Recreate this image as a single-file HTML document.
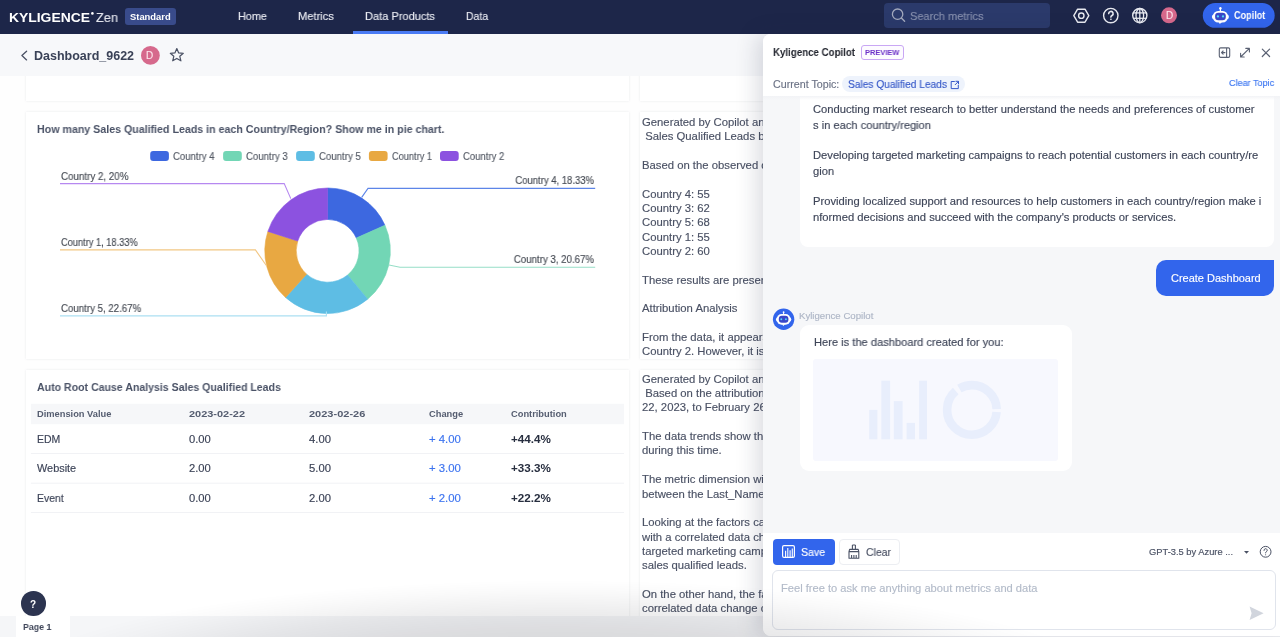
<!DOCTYPE html>
<html><head><meta charset="utf-8">
<style>
*{box-sizing:border-box;margin:0;padding:0}
html,body{width:1280px;height:637px;overflow:hidden;background:#fefefe;font-family:"Liberation Sans",sans-serif;color:#3f4659;position:relative}
.a{position:absolute}
.t{position:absolute;line-height:1;white-space:pre;will-change:transform}
.s{-webkit-text-stroke:0.15px currentColor}
.card{position:absolute;background:#fff;box-shadow:0 0 2.5px rgba(20,30,50,0.09)}
svg{position:absolute;overflow:visible}
</style></head><body>
<!-- NAV -->
<div class="a" style="left:0;top:0;width:1280px;height:34px;background:#1d2649"></div>
<div class="a" style="left:125px;top:8px;width:51px;height:17px;background:#394b8b;border-radius:3px"></div>
<div class="a" style="left:353px;top:31px;width:95px;height:3px;background:#4a7bf4"></div>
<div class="a" style="left:884px;top:3px;width:166px;height:25px;background:#2b3a6b;border-radius:4px"></div>
<svg style="left:0;top:0" width="1280" height="34">
  <circle cx="897.6" cy="14.2" r="5.2" fill="none" stroke="#a3a9bd" stroke-width="1.3"/>
  <line x1="901.4" y1="18" x2="904.6" y2="21.2" stroke="#a3a9bd" stroke-width="1.4" stroke-linecap="round"/>
  <polygon points="1073.8,15.7 1077.6,9.2 1085,9.2 1088.8,15.7 1085,22.2 1077.6,22.2" fill="none" stroke="#e8eaf0" stroke-width="1.4" stroke-linejoin="round"/>
  <circle cx="1081.3" cy="15.7" r="2.7" fill="none" stroke="#e8eaf0" stroke-width="1.4"/>
  <circle cx="1110.8" cy="15.6" r="7.2" fill="none" stroke="#e8eaf0" stroke-width="1.4"/>
  <path d="M1108.7 13.6 a2.2 2.2 0 1 1 3.3 1.9 c-0.8 0.45 -1.1 0.8 -1.1 1.6" fill="none" stroke="#e8eaf0" stroke-width="1.6" stroke-linecap="round"/>
  <rect x="1110.2" y="18.6" width="1.4" height="1.4" fill="#e8eaf0"/>
  <circle cx="1139.8" cy="15.6" r="7.1" fill="none" stroke="#e8eaf0" stroke-width="1.4"/>
  <ellipse cx="1139.8" cy="15.6" rx="3.8" ry="7.1" fill="none" stroke="#e8eaf0" stroke-width="1.3"/>
  <line x1="1139.8" y1="8.5" x2="1139.8" y2="22.7" stroke="#e8eaf0" stroke-width="1.3"/>
  <line x1="1133" y1="12.9" x2="1146.6" y2="12.9" stroke="#e8eaf0" stroke-width="1.3"/>
  <line x1="1133" y1="18.3" x2="1146.6" y2="18.3" stroke="#e8eaf0" stroke-width="1.3"/>
  <circle cx="1169" cy="15.3" r="8" fill="#d6698c"/>
  <circle cx="92.4" cy="13.4" r="1.3" fill="#fff"/>
  <rect x="1202.8" y="3.1" width="71.9" height="24.7" rx="12.35" fill="#3265ec"/>
  <line x1="1220.4" y1="8.6" x2="1220.4" y2="11.6" stroke="#fff" stroke-width="1.3"/>
  <circle cx="1220.4" cy="8.3" r="1.2" fill="#fff"/>
  <rect x="1212.9" y="11.1" width="15" height="11.4" rx="5.2" fill="#fff"/>
  <rect x="1211.9" y="14.4" width="17" height="4.9" rx="2.4" fill="#fff"/>
  <rect x="1215.1" y="12.7" width="10.7" height="7.5" rx="3.3" fill="#3a47c9"/>
  <circle cx="1217.9" cy="16.4" r="1.15" fill="#52d9f6"/>
  <circle cx="1223" cy="16.4" r="1.15" fill="#52d9f6"/>
  <path d="M1218.6 21.8 h3.8 l-2.6 2.2 z" fill="#fff"/>
</svg>
<div class="t" style="left:8.70px;top:10px;font-size:13px;line-height:15px;color:#fff;font-weight:bold;transform:scaleX(1.0673);transform-origin:0 0;">KYLIGENCE</div>
<div class="t s" style="left:96.30px;top:10px;font-size:13px;line-height:15px;color:#e4e6ee;transform:scaleX(0.9788);transform-origin:0 0;">Zen</div>
<div class="t" style="left:130.00px;top:12px;font-size:9.3px;line-height:10px;color:#fff;font-weight:bold;transform:scaleX(1.0095);transform-origin:0 0;">Standard</div>
<div class="t s" style="left:237.50px;top:10px;font-size:11.5px;line-height:12px;color:#e9ebf2;transform:scaleX(0.9412);transform-origin:0 0;">Home</div>
<div class="t s" style="left:297.70px;top:10px;font-size:11.5px;line-height:12px;color:#e9ebf2;transform:scaleX(0.9677);transform-origin:0 0;">Metrics</div>
<div class="t s" style="left:364.80px;top:10px;font-size:11.5px;line-height:12px;color:#e9ebf2;transform:scaleX(0.9601);transform-origin:0 0;">Data Products</div>
<div class="t s" style="left:466.00px;top:10px;font-size:11.5px;line-height:12px;color:#e9ebf2;transform:scaleX(0.9078);transform-origin:0 0;">Data</div>
<div class="t s" style="left:910.30px;top:10px;font-size:11.5px;line-height:12px;color:#8790ae;transform:scaleX(0.9579);transform-origin:0 0;">Search metrics</div>
<div class="t" style="left:1233.75px;top:10px;font-size:10px;line-height:11px;color:#fff;font-weight:bold;transform:scaleX(0.9087);transform-origin:0 0;">Copilot</div>
<div class="t s" style="left:1165.50px;top:10px;font-size:10px;line-height:11px;color:#fbe3ea;">D</div>
<!-- CONTENT CARDS -->
<div class="card" style="left:26px;top:40px;width:603px;height:61px"></div>
<div class="card" style="left:640px;top:40px;width:620px;height:61px"></div>
<div class="card" style="left:26px;top:112px;width:603px;height:247px"></div>
<div class="card" style="left:640px;top:112px;width:620px;height:247px"></div>
<div class="card" style="left:26px;top:370px;width:603px;height:300px"></div>
<div class="card" style="left:640px;top:370px;width:620px;height:300px"></div>
<div class="a" style="left:0;top:76px;width:1280px;height:0"></div>
<svg style="left:0;top:0" width="700" height="637">
  <g>
    <rect x="150.2" y="150.9" width="18.7" height="10.2" rx="3" fill="#3d68e0"/>
    <rect x="223.1" y="150.9" width="18.7" height="10.2" rx="3" fill="#72d6b5"/>
    <rect x="296.1" y="150.9" width="18.7" height="10.2" rx="3" fill="#5ebde4"/>
    <rect x="368.9" y="150.9" width="18.7" height="10.2" rx="3" fill="#e8a842"/>
    <rect x="440" y="150.9" width="18.7" height="10.2" rx="3" fill="#8c52e0"/>
  </g>
  <g id="pie"><path d="M327.60 188.00 A62.8 62.8 0 0 1 384.97 225.24 L356.28 238.02 A31.4 31.4 0 0 0 327.60 219.40 Z" fill="#3d68e0" stroke="#3d68e0" stroke-width="0.6" stroke-linejoin="round"/><path d="M384.97 225.24 A62.8 62.8 0 0 1 367.63 299.19 L347.62 274.99 A31.4 31.4 0 0 0 356.28 238.02 Z" fill="#72d6b5" stroke="#72d6b5" stroke-width="0.6" stroke-linejoin="round"/><path d="M367.63 299.19 A62.8 62.8 0 0 1 285.57 297.46 L306.58 274.13 A31.4 31.4 0 0 0 347.62 274.99 Z" fill="#5ebde4" stroke="#5ebde4" stroke-width="0.6" stroke-linejoin="round"/><path d="M285.57 297.46 A62.8 62.8 0 0 1 267.87 231.39 L297.74 241.10 A31.4 31.4 0 0 0 306.58 274.13 Z" fill="#e8a842" stroke="#e8a842" stroke-width="0.6" stroke-linejoin="round"/><path d="M267.87 231.39 A62.8 62.8 0 0 1 327.60 188.00 L327.60 219.40 A31.4 31.4 0 0 0 297.74 241.10 Z" fill="#8c52e0" stroke="#8c52e0" stroke-width="0.6" stroke-linejoin="round"/></g>
  <g fill="none" stroke-width="1.1">
    <polyline points="60,183.6 284.2,183.6 290.8,198.6" stroke="#b688f0"/>
    <polyline points="60,249.9 255.4,249.9 266.5,265.8" stroke="#f2c784"/>
    <polyline points="60,315.9 326.4,315.9 326.4,311.5" stroke="#ace0f2"/>
    <polyline points="595.2,188.4 368,188.4 361.7,197.4" stroke="#5d85e8"/>
    <polyline points="595.2,267.3 400,267.3 389,265" stroke="#97dec7"/>
  </g>
  <rect x="30.9" y="403.8" width="593.1" height="20.4" fill="#f6f7f9"/>
  <rect x="30.9" y="453" width="593.1" height="1" fill="#f1f2f5"/>
  <rect x="30.9" y="482.7" width="593.1" height="1" fill="#f1f2f5"/>
  <rect x="30.9" y="512" width="593.1" height="1" fill="#f1f2f5"/>
</svg>
<!-- CRUMB -->
<div class="a" style="left:0;top:34px;width:1280px;height:42px;background:#f7f8fa"></div>
<svg style="left:0;top:0" width="300" height="80">
  <path d="M26.6 51.3 L21.9 55.6 L26.6 59.9" fill="none" stroke="#4a5164" stroke-width="1.3" stroke-linecap="round" stroke-linejoin="round"/>
  <circle cx="150.4" cy="55.4" r="9.4" fill="#d6698c"/>
  <path d="M176.8 48.6 L178.7 52.9 L183.3 53.3 L179.8 56.3 L180.9 60.8 L176.8 58.4 L172.7 60.8 L173.8 56.3 L170.3 53.3 L174.9 52.9 Z" fill="none" stroke="#4a5164" stroke-width="1.2" stroke-linejoin="round"/>
</svg>
<div class="t" style="left:34.40px;top:49px;font-size:12.5px;line-height:14px;color:#3a4257;font-weight:bold;">Dashboard_9622</div>
<div class="t s" style="left:146.30px;top:50px;font-size:10px;line-height:11px;color:#fbe3ea;">D</div>
<div class="t" style="left:37.40px;top:123px;font-size:10.8px;line-height:12px;color:#4b5367;font-weight:bold;transform:scaleX(0.9858);transform-origin:0 0;">How many Sales Qualified Leads in each Country/Region? Show me in pie chart.</div>
<div class="t s" style="left:173.10px;top:151px;font-size:10.4px;line-height:11px;color:#555b66;transform:scaleX(0.9212);transform-origin:0 0;">Country 4</div>
<div class="t s" style="left:246.10px;top:151px;font-size:10.4px;line-height:11px;color:#555b66;transform:scaleX(0.9256);transform-origin:0 0;">Country 3</div>
<div class="t s" style="left:318.75px;top:151px;font-size:10.4px;line-height:11px;color:#555b66;transform:scaleX(0.9278);transform-origin:0 0;">Country 5</div>
<div class="t s" style="left:392.00px;top:151px;font-size:10.4px;line-height:11px;color:#555b66;transform:scaleX(0.8880);transform-origin:0 0;">Country 1</div>
<div class="t s" style="left:463.00px;top:151px;font-size:10.4px;line-height:11px;color:#555b66;transform:scaleX(0.9167);transform-origin:0 0;">Country 2</div>
<div class="t s" style="left:60.50px;top:171px;font-size:10.4px;line-height:11px;color:#474c55;transform:scaleX(0.9414);transform-origin:0 0;">Country 2, 20%</div>
<div class="t s" style="left:60.50px;top:237px;font-size:10.4px;line-height:11px;color:#474c55;transform:scaleX(0.8914);transform-origin:0 0;">Country 1, 18.33%</div>
<div class="t s" style="left:60.50px;top:303px;font-size:10.4px;line-height:11px;color:#474c55;transform:scaleX(0.9321);transform-origin:0 0;">Country 5, 22.67%</div>
<div class="t s" style="right:686.22px;top:175px;font-size:10.4px;line-height:11px;color:#474c55;transform:scaleX(0.9147);transform-origin:100% 0;">Country 4, 18.33%</div>
<div class="t s" style="right:686.22px;top:254px;font-size:10.4px;line-height:11px;color:#474c55;transform:scaleX(0.9321);transform-origin:100% 0;">Country 3, 20.67%</div>
<div class="t" style="left:37.00px;top:381px;font-size:10.8px;line-height:12px;color:#4b5367;font-weight:bold;transform:scaleX(0.9788);transform-origin:0 0;">Auto Root Cause Analysis Sales Qualified Leads</div>
<div class="t" style="left:37.30px;top:409px;font-size:9.3px;line-height:10px;color:#555d70;font-weight:bold;transform:scaleX(0.9956);transform-origin:0 0;">Dimension Value</div>
<div class="t" style="left:188.60px;top:409px;font-size:9.3px;line-height:10px;color:#555d70;font-weight:bold;transform:scaleX(1.1776);transform-origin:0 0;">2023-02-22</div>
<div class="t" style="left:309.00px;top:409px;font-size:9.3px;line-height:10px;color:#555d70;font-weight:bold;transform:scaleX(1.1839);transform-origin:0 0;">2023-02-26</div>
<div class="t" style="left:429.00px;top:409px;font-size:9.3px;line-height:10px;color:#555d70;font-weight:bold;transform:scaleX(0.9964);transform-origin:0 0;">Change</div>
<div class="t" style="left:510.70px;top:409px;font-size:9.3px;line-height:10px;color:#555d70;font-weight:bold;transform:scaleX(0.9949);transform-origin:0 0;">Contribution</div>
<div class="t s" style="left:37.30px;top:433px;font-size:10.5px;line-height:12px;color:#3c4357;">EDM</div>
<div class="t s" style="left:188.50px;top:433px;font-size:10.5px;line-height:12px;color:#3c4357;transform:scaleX(1.0681);transform-origin:0 0;">0.00</div>
<div class="t s" style="left:309.00px;top:433px;font-size:10.5px;line-height:12px;color:#3c4357;transform:scaleX(1.0730);transform-origin:0 0;">4.00</div>
<div class="t s" style="left:429.00px;top:433px;font-size:10.5px;line-height:12px;color:#3d74ef;transform:scaleX(1.0828);transform-origin:0 0;">+ 4.00</div>
<div class="t" style="left:510.70px;top:433px;font-size:10.5px;line-height:12px;color:#272e3f;font-weight:bold;transform:scaleX(1.1103);transform-origin:0 0;">+44.4%</div>
<div class="t s" style="left:37.30px;top:462px;font-size:10.5px;line-height:12px;color:#3c4357;transform:scaleX(1.0369);transform-origin:0 0;">Website</div>
<div class="t s" style="left:188.50px;top:462px;font-size:10.5px;line-height:12px;color:#3c4357;transform:scaleX(1.0681);transform-origin:0 0;">2.00</div>
<div class="t s" style="left:309.00px;top:462px;font-size:10.5px;line-height:12px;color:#3c4357;transform:scaleX(1.0730);transform-origin:0 0;">5.00</div>
<div class="t s" style="left:429.00px;top:462px;font-size:10.5px;line-height:12px;color:#3d74ef;transform:scaleX(1.0828);transform-origin:0 0;">+ 3.00</div>
<div class="t" style="left:510.70px;top:462px;font-size:10.5px;line-height:12px;color:#272e3f;font-weight:bold;transform:scaleX(1.1103);transform-origin:0 0;">+33.3%</div>
<div class="t s" style="left:37.30px;top:492px;font-size:10.5px;line-height:12px;color:#3c4357;transform:scaleX(0.9914);transform-origin:0 0;">Event</div>
<div class="t s" style="left:188.50px;top:492px;font-size:10.5px;line-height:12px;color:#3c4357;transform:scaleX(1.0681);transform-origin:0 0;">0.00</div>
<div class="t s" style="left:309.00px;top:492px;font-size:10.5px;line-height:12px;color:#3c4357;transform:scaleX(1.0730);transform-origin:0 0;">2.00</div>
<div class="t s" style="left:429.00px;top:492px;font-size:10.5px;line-height:12px;color:#3d74ef;transform:scaleX(1.0828);transform-origin:0 0;">+ 2.00</div>
<div class="t" style="left:510.70px;top:492px;font-size:10.5px;line-height:12px;color:#272e3f;font-weight:bold;transform:scaleX(1.1103);transform-origin:0 0;">+22.2%</div>
<div class="t s" style="left:641.80px;top:116px;font-size:11.3px;line-height:12px;color:#4a5164;">Generated by Copilot and analysis the</div>
<div class="t s" style="left:641.80px;top:130px;font-size:11.3px;line-height:12px;color:#4a5164;"> Sales Qualified Leads by Country/Region</div>
<div class="t s" style="left:641.80px;top:159px;font-size:11.3px;line-height:12px;color:#4a5164;">Based on the observed data</div>
<div class="t s" style="left:641.80px;top:188px;font-size:11.3px;line-height:12px;color:#4a5164;">Country 4: 55</div>
<div class="t s" style="left:641.80px;top:202px;font-size:11.3px;line-height:12px;color:#4a5164;">Country 3: 62</div>
<div class="t s" style="left:641.80px;top:216px;font-size:11.3px;line-height:12px;color:#4a5164;">Country 5: 68</div>
<div class="t s" style="left:641.80px;top:231px;font-size:11.3px;line-height:12px;color:#4a5164;">Country 1: 55</div>
<div class="t s" style="left:641.80px;top:245px;font-size:11.3px;line-height:12px;color:#4a5164;">Country 2: 60</div>
<div class="t s" style="left:641.80px;top:274px;font-size:11.3px;line-height:12px;color:#4a5164;">These results are presented</div>
<div class="t s" style="left:641.80px;top:302px;font-size:11.3px;line-height:12px;color:#4a5164;">Attribution Analysis</div>
<div class="t s" style="left:641.80px;top:331px;font-size:11.3px;line-height:12px;color:#4a5164;">From the data, it appears that</div>
<div class="t s" style="left:641.80px;top:345px;font-size:11.3px;line-height:12px;color:#4a5164;">Country 2. However, it is</div>
<div class="t s" style="left:641.80px;top:373px;font-size:11.3px;line-height:12px;color:#4a5164;">Generated by Copilot and analysis</div>
<div class="t s" style="left:641.80px;top:387px;font-size:11.3px;line-height:12px;color:#4a5164;"> Based on the attribution analysis</div>
<div class="t s" style="left:641.80px;top:401px;font-size:11.3px;line-height:12px;color:#4a5164;">22, 2023, to February 26</div>
<div class="t s" style="left:641.80px;top:430px;font-size:11.3px;line-height:12px;color:#4a5164;">The data trends show that</div>
<div class="t s" style="left:641.80px;top:444px;font-size:11.3px;line-height:12px;color:#4a5164;">during this time.</div>
<div class="t s" style="left:641.80px;top:473px;font-size:11.3px;line-height:12px;color:#4a5164;">The metric dimension with</div>
<div class="t s" style="left:641.80px;top:488px;font-size:11.3px;line-height:12px;color:#4a5164;">between the Last_Name</div>
<div class="t s" style="left:641.80px;top:516px;font-size:11.3px;line-height:12px;color:#4a5164;">Looking at the factors causing</div>
<div class="t s" style="left:641.80px;top:531px;font-size:11.3px;line-height:12px;color:#4a5164;">with a correlated data change</div>
<div class="t s" style="left:641.80px;top:545px;font-size:11.3px;line-height:12px;color:#4a5164;">targeted marketing campaigns</div>
<div class="t s" style="left:641.80px;top:559px;font-size:11.3px;line-height:12px;color:#4a5164;">sales qualified leads.</div>
<div class="t s" style="left:641.80px;top:588px;font-size:11.3px;line-height:12px;color:#4a5164;">On the other hand, the factor</div>
<div class="t s" style="left:641.80px;top:602px;font-size:11.3px;line-height:12px;color:#4a5164;">correlated data change of</div>
<!-- BOTTOM BAR -->
<div class="a" style="left:0;top:615.75px;width:1280px;height:22px;background:#f5f6f8"></div>
<div class="a" style="left:16px;top:615.75px;width:54px;height:22px;background:#fff"></div>
<div class="a" style="left:21.2px;top:591px;width:24.5px;height:24.5px;border-radius:50%;background:#2c3450"></div>
<div class="t" style="left:23.25px;top:621px;font-size:9.8px;line-height:11px;color:#40475a;font-weight:bold;transform:scaleX(0.8946);transform-origin:0 0;">Page 1</div>
<div class="t" style="left:29.50px;top:599px;font-size:10px;line-height:11px;color:#fff;font-weight:bold;">?</div>
<!-- PANEL -->
<div class="a" style="left:763px;top:34px;width:530px;height:602px;background:#fff;border-radius:8px 0 0 8px;box-shadow:-6px 0 22px rgba(30,40,70,0.16)"></div>
<div class="a" style="left:763px;top:96px;width:517px;height:437px;background:#f6f7f9"></div>
<div class="a" style="left:800px;top:60px;width:474px;height:187.3px;background:#fff;border-radius:8px"></div>
<div class="a" style="left:763px;top:34px;width:517px;height:62px;background:#fff;border-radius:8px 0 0 0"></div>
<div class="a" style="left:763px;top:96px;width:517px;height:4px;background:linear-gradient(#f2f3f6,rgba(246,247,249,0))"></div>
<div class="a" style="left:1156.4px;top:260.4px;width:118.1px;height:35.9px;background:#3265ec;border-radius:10px 0 10px 10px"></div>
<div class="a" style="left:799.5px;top:324.6px;width:272.5px;height:146.2px;background:#fff;border-radius:9px"></div>
<div class="a" style="left:813.2px;top:358.7px;width:244.6px;height:102.6px;background:#f7f8fe;border-radius:3px"></div>
<div class="a" style="left:763px;top:533px;width:517px;height:103px;background:#fff;border-radius:0 0 0 8px"></div>
<div class="a" style="left:772.9px;top:539px;width:62.1px;height:26px;background:#3265ec;border-radius:4px"></div>
<div class="a" style="left:838.5px;top:539px;width:61.5px;height:26px;border:1px solid #eceef2;border-radius:4px"></div>
<div class="a" style="left:861.2px;top:45.2px;width:42.4px;height:14.6px;border:1px solid #c9a7f4;border-radius:3px;background:#fdfbff"></div>
<div class="a" style="left:842.3px;top:75.6px;width:122.9px;height:16.7px;background:#eef3fc;border-radius:8px"></div>
<div class="a" style="left:772px;top:570.4px;width:503.5px;height:59.9px;border:1px solid #e0e4ec;border-radius:6px"></div>
<svg style="left:0;top:0" width="1280" height="637">
  <!-- header icons -->
  <rect x="1219.3" y="47.9" width="10.4" height="9.5" rx="1.3" fill="none" stroke="#5a6173" stroke-width="1.1"/>
  <line x1="1226.6" y1="47.9" x2="1226.6" y2="57.4" stroke="#5a6173" stroke-width="1.1"/>
  <path d="M1225 52.6 h-3.4 M1223.1 51 l-1.6 1.6 l1.6 1.6" fill="none" stroke="#5a6173" stroke-width="1.1" stroke-linecap="round" stroke-linejoin="round"/>
  <path d="M1240.6 57 L1249.4 48.4 M1245.8 48.4 H1249.4 V52 M1240.6 53.4 V57 H1244.2" fill="none" stroke="#5a6173" stroke-width="1.1" stroke-linecap="round" stroke-linejoin="round"/>
  <path d="M1262.3 49.2 L1269.6 56.5 M1269.6 49.2 L1262.3 56.5" fill="none" stroke="#5a6173" stroke-width="1.2" stroke-linecap="round"/>
  <!-- external link -->
  <path d="M954.8 81.5 H951.2 V88.6 H958.3 V85" fill="none" stroke="#3658c8" stroke-width="1" stroke-linejoin="round"/>
  <path d="M955.2 84.7 L958.4 81.5 M955.9 81.3 H958.5 V83.9" fill="none" stroke="#3658c8" stroke-width="1" stroke-linecap="round"/>
  <!-- avatar -->
  <circle cx="783.6" cy="319.3" r="10.7" fill="#3265ec"/>
  <line x1="783.6" y1="312.4" x2="783.6" y2="314.6" stroke="#fff" stroke-width="1"/>
  <circle cx="783.6" cy="312.2" r="0.9" fill="#fff"/>
  <rect x="776.8" y="314.1" width="13.6" height="10.6" rx="4.8" fill="#fff"/>
  <rect x="775.9" y="317.2" width="15.4" height="4.4" rx="2.2" fill="#fff"/>
  <rect x="778.8" y="315.7" width="9.6" height="7" rx="3" fill="#3a47c9"/>
  <circle cx="781.3" cy="319.3" r="0.95" fill="#52d9f6"/>
  <circle cx="785.9" cy="319.3" r="0.95" fill="#52d9f6"/>
  <path d="M782.2 324.2 h3 l-2 1.9 z" fill="#fff"/>
  <!-- placeholder chart -->
  <g fill="#e8eefc">
    <rect x="869.2" y="409.9" width="8.2" height="29.4"/>
    <rect x="881.3" y="380.7" width="8.8" height="58.6"/>
    <rect x="893.8" y="401.1" width="8.8" height="38.2"/>
    <rect x="906.6" y="422.9" width="8.4" height="16.4"/>
    <rect x="919.1" y="380.7" width="7.9" height="58.6"/>
  </g>
  <circle cx="971.9" cy="409.9" r="24.8" fill="none" stroke="#e8eefc" stroke-width="8.6" stroke-dasharray="96.4 4.4 51 4.4" stroke-dashoffset="-2.2"/>
  <!-- save icon -->
  <rect x="782.6" y="545.6" width="11.8" height="11.8" rx="1.4" fill="none" stroke="#fff" stroke-width="1.2"/>
  <path d="M785.6 557 V550.8 M787.8 557 V548 M790.1 557 V550.2 M792.3 557 V548.6" stroke="#fff" stroke-width="1.1"/>
  <!-- broom icon -->
  <path d="M852.4 545 V549 M855.4 545 V549 M852.4 545 H855.4" fill="none" stroke="#4a5164" stroke-width="1.1"/>
  <path d="M849.6 549.4 H858.2 L858.8 551.6 H849 Z M849 551.6 V558.2 H858.8 V551.6 M851.6 555 V558.2 M853.9 555 V558.2 M856.2 555 V558.2" fill="none" stroke="#4a5164" stroke-width="1.1" stroke-linejoin="round"/>
  <!-- caret -->
  <path d="M1244 551 L1249 551 L1246.5 553.8 Z" fill="#4a5164"/>
  <circle cx="1265.6" cy="551.8" r="5.4" fill="none" stroke="#4a5164" stroke-width="1"/>
  <path d="M1264 550.4 a1.6 1.6 0 1 1 2.4 1.3 c-0.6 0.3 -0.8 0.6 -0.8 1.2" fill="none" stroke="#4a5164" stroke-width="1" stroke-linecap="round"/>
  <circle cx="1265.6" cy="554.7" r="0.55" fill="#4a5164"/>
  <!-- send -->
  <path d="M1249.6 606.5 L1263.6 613.2 L1249.6 620 L1251.6 613.2 Z" fill="#d1d5dd"/>
</svg>
<div class="t" style="left:772.60px;top:46px;font-size:10.8px;line-height:12px;color:#22252e;font-weight:bold;transform:scaleX(0.8997);transform-origin:0 0;">Kyligence Copilot</div>
<div class="t" style="left:865.00px;top:48px;font-size:7.6px;line-height:9px;color:#6c30c8;font-weight:bold;transform:scaleX(0.9818);transform-origin:0 0;">PREVIEW</div>
<div class="t s" style="left:772.60px;top:78px;font-size:10.5px;line-height:12px;color:#6b7285;transform:scaleX(1.0180);transform-origin:0 0;">Current Topic:</div>
<div class="t s" style="left:847.80px;top:78px;font-size:10.5px;line-height:12px;color:#3658c8;transform:scaleX(0.9686);transform-origin:0 0;">Sales Qualified Leads</div>
<div class="t s" style="left:1228.90px;top:78px;font-size:9.3px;line-height:10px;color:#3d77f2;transform:scaleX(0.9732);transform-origin:0 0;">Clear Topic</div>
<div class="t s" style="left:813.10px;top:103px;font-size:11.2px;line-height:12px;color:#3e4558;">Conducting market research to better understand the needs and preferences of customer</div>
<div class="t s" style="left:813.10px;top:119px;font-size:11.2px;line-height:12px;color:#3e4558;transform:scaleX(0.9936);transform-origin:0 0;">s in each country/region</div>
<div class="t s" style="left:813.10px;top:149px;font-size:11.2px;line-height:12px;color:#3e4558;">Developing targeted marketing campaigns to reach potential customers in each country/re</div>
<div class="t s" style="left:813.10px;top:165px;font-size:11.2px;line-height:12px;color:#3e4558;transform:scaleX(0.9938);transform-origin:0 0;">gion</div>
<div class="t s" style="left:813.10px;top:195px;font-size:11.2px;line-height:12px;color:#3e4558;">Providing localized support and resources to help customers in each country/region make i</div>
<div class="t s" style="left:813.10px;top:211px;font-size:11.2px;line-height:12px;color:#3e4558;transform:scaleX(1.0046);transform-origin:0 0;">nformed decisions and succeed with the company&#x27;s products or services.</div>
<div class="t s" style="left:1170.80px;top:272px;font-size:10.8px;line-height:12px;color:#fff;transform:scaleX(1.0168);transform-origin:0 0;">Create Dashboard</div>
<div class="t s" style="left:798.90px;top:310px;font-size:9.5px;line-height:11px;color:#aeb6c6;transform:scaleX(1.0127);transform-origin:0 0;">Kyligence Copilot</div>
<div class="t s" style="left:813.50px;top:336px;font-size:11.2px;line-height:12px;color:#3e4558;transform:scaleX(0.9931);transform-origin:0 0;">Here is the dashboard created for you:</div>
<div class="t s" style="left:801.00px;top:546px;font-size:11px;line-height:12px;color:#fff;transform:scaleX(0.9617);transform-origin:0 0;">Save</div>
<div class="t s" style="left:865.60px;top:546px;font-size:11px;line-height:12px;color:#4a5164;transform:scaleX(0.9503);transform-origin:0 0;">Clear</div>
<div class="t s" style="left:1149.30px;top:547px;font-size:9px;line-height:10px;color:#4a5164;transform:scaleX(1.0366);transform-origin:0 0;">GPT-3.5 by Azure ...</div>
<div class="t s" style="left:780.50px;top:582px;font-size:10.8px;line-height:12px;color:#b3bbc9;transform:scaleX(1.0299);transform-origin:0 0;">Feel free to ask me anything about metrics and data</div>
<div class="a" style="left:0;top:540px;width:1280px;height:97px;pointer-events:none;background:radial-gradient(ellipse 560px 110px at 560px 150px, rgba(0,0,10,0.16), rgba(0,0,10,0.10) 55%, rgba(0,0,10,0.065) 72%, rgba(0,0,10,0.02) 90%, rgba(0,0,0,0) 100%)"></div>
</body></html>
